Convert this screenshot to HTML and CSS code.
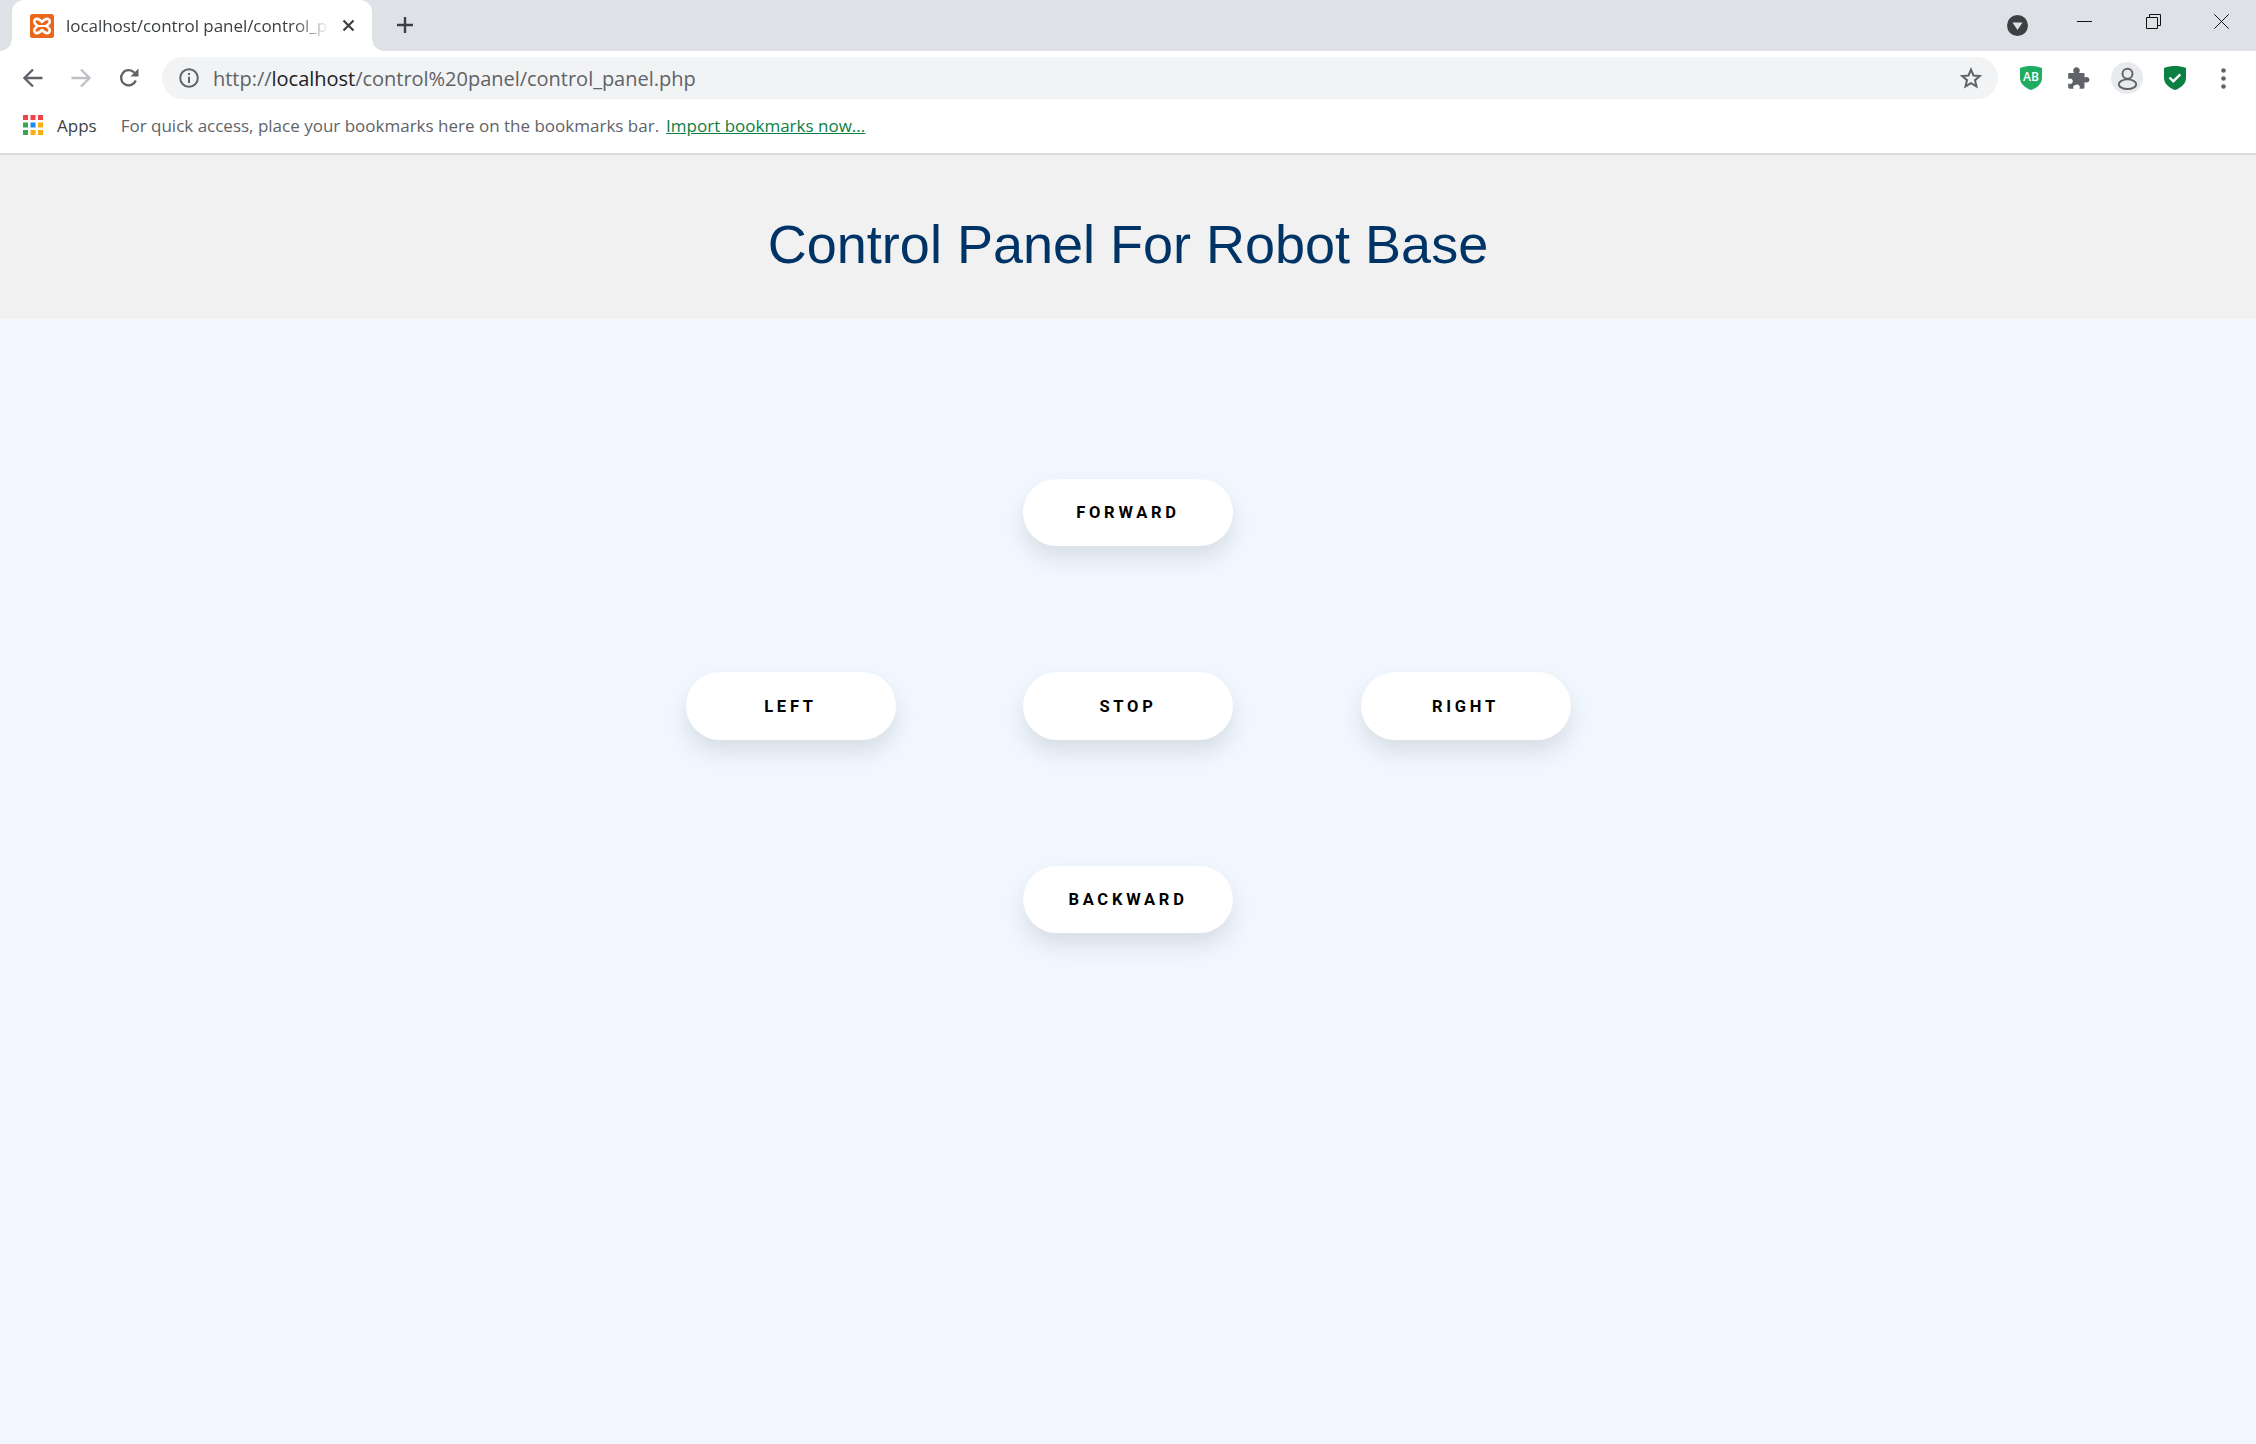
FILE: index.html
```html
<!DOCTYPE html>
<html lang="en">
<head>
<meta charset="utf-8">
<title>localhost/control panel/control_panel.php</title>
<link rel="stylesheet" href="styles.css">
</head>
<body>
<div class="browser">
  <div class="tabstrip">
    <div class="tab">
      <svg class="favicon" viewBox="0 0 24 24"><rect width="24" height="24" rx="2.500" fill="#e8671b"/><path d="M7 3.500c2 0 3 1 5 2.500c2-1.500 3-2.500 5-2.500c2.500 0 4 1.800 4 4c0 1.800-1.200 3.200-2.800 4.500c1.600 1.300 2.800 2.700 2.800 4.500c0 2.200-1.500 4-4 4c-2 0-3-1-5-2.500c-2 1.500-3 2.500-5 2.500c-2.500 0-4-1.800-4-4c0-1.800 1.200-3.200 2.800-4.500C4.200 10.700 3 9.300 3 7.500c0-2.200 1.500-4 4-4z" fill="#fff"/><path d="M7 6.300c1.500 0 3 1.900 5 3.100c2-1.200 3.500-3.100 5-3.100c1 0 1.500.6 1.500 1.300c0 1-1.500 2.300-3 3.400h-7c-1.500-1.100-3-2.400-3-3.400C5.500 6.900 6 6.300 7 6.300zM7 17.700c1.500 0 3-1.900 5-3.100c2 1.200 3.500 3.100 5 3.100c1 0 1.500-.6 1.500-1.300c0-1-1.500-2.300-3-3.400h-7c-1.500 1.100-3 2.400-3 3.400C5.500 17.100 6 17.700 7 17.700z" fill="#e8671b"/></svg>
      <span class="tab-title">localhost/control panel/control_p</span>
      <svg class="tab-close" viewBox="0 0 13 13"><path d="M1.500 1.500l10 10M11.500 1.500l-10 10" stroke="#3c4043" stroke-width="2.200"/></svg>
    </div>
    <svg class="new-tab" viewBox="0 0 18 18"><path d="M9 1v16M1 9h16" stroke="#3c4043" stroke-width="2.400"/></svg>
    <div class="strip-space"></div>
    <svg class="profile-menu" viewBox="0 0 21 21"><circle cx="10.500" cy="10.500" r="10.500" fill="#3c4043"/><path d="M5.500 7.500h10l-5 7.500z" fill="#dee1e6"/></svg>
    <div class="window-controls">
      <svg class="win" viewBox="0 0 15 15"><path d="M0 7.500h15" stroke="#111" stroke-width="1"/></svg>
      <svg class="win" viewBox="0 0 15 15"><path d="M.5 3.500h11v11H.5zM3.500 3.500V.5h11v11h-3" fill="none" stroke="#111" stroke-width="1"/></svg>
      <svg class="win" viewBox="0 0 15 15"><path d="M.3.300l14.400 14.400M14.700.300L.3 14.700" stroke="#111" stroke-width="1"/></svg>
    </div>
  </div>
  <div class="toolbar">
    <svg class="nav" viewBox="0 0 20 20"><path d="M19.500 10H2M10 1.500L1.500 10l8.500 8.500" fill="none" stroke="#5f6368" stroke-width="2.300"/></svg>
    <svg class="nav" viewBox="0 0 20 20"><path d="M.5 10H18M10 1.500l8.500 8.500-8.500 8.500" fill="none" stroke="#bdc1c6" stroke-width="2.300"/></svg>
    <svg class="nav" viewBox="0 0 20 20"><path d="M16.800 12.500A7.600 7.600 0 1 1 15.400 4.700" fill="none" stroke="#5f6368" stroke-width="2.300"/><path d="M19.500.6v8h-8z" fill="#5f6368"/></svg>
    <div class="omnibox">
      <svg class="info" viewBox="0 0 20 20"><circle cx="10" cy="10" r="8.800" fill="none" stroke="#5f6368" stroke-width="2"/><path d="M9 8.700h2V15H9zM9 5h2v2H9z" fill="#5f6368"/></svg>
      <span class="url">http://<b class="host">localhost</b>/control%20panel/control_panel.php</span>
      <svg class="star" viewBox="0 0 22 22"><path d="M11 2.600l2.500 5.900 6.300.5-4.800 4.200 1.500 6.200-5.500-3.300-5.500 3.300 1.500-6.200L2.200 9l6.300-.5z" fill="none" stroke="#5f6368" stroke-width="2"/></svg>
    </div>
    <div class="extensions">
      <svg class="shield" viewBox="0 0 22 24"><path d="M11 0c3.500 0 7 .6 11 2v10c0 5.500-5 10-11 12C5 22 0 17.500 0 12V2C4 .6 7.500 0 11 0z" fill="#1ead63"/><text class="ab" x="11" y="15" text-anchor="middle">AB</text></svg>
      <svg class="puzzle" viewBox="0 0 22 22"><path d="M1 6h5c-.5-1-.8-1.700-.8-2.600C5.200 1.500 6.700.2 8.500.2s3.300 1.300 3.300 3.200c0 .9-.3 1.600-.8 2.600h4.500c.6 0 1 .4 1 1v3.500c1-.5 1.400-.6 2.100-.6 1.600 0 2.900 1.200 2.900 2.800s-1.300 2.800-2.900 2.800c-.7 0-1.100-.1-2.100-.6V20c0 1-.6 1.800-1.600 1.800h-3.600c.4-.8.500-1.200.5-1.800 0-1.500-1.200-2.500-2.800-2.500S5.200 18.500 5.200 20c0 .6.100 1 .5 1.800H2c-1 0-1.800-.8-1.800-1.800v-3.400c.7.300 1.200.5 1.800.5 1.600 0 2.800-1.200 2.800-2.800S3.600 11.500 2 11.500c-.6 0-1.100.2-1.800.5V7c0-.6.300-1 .8-1z" fill="#5f6368"/></svg>
      <div class="avatar">
        <svg viewBox="0 0 24 26"><circle cx="12" cy="7.500" r="5.700" fill="none" stroke="#5f6368" stroke-width="2.200"/><ellipse cx="12" cy="19.500" rx="10" ry="5.500" fill="none" stroke="#5f6368" stroke-width="2.200"/></svg>
      </div>
      <svg class="shield" viewBox="0 0 22 24"><path d="M11 0c3.500 0 7 .6 11 2v10c0 5.500-5 10-11 12C5 22 0 17.500 0 12V2C4 .6 7.500 0 11 0z" fill="#0b8043"/><path d="M5.500 11.500l3.800 3.800 7-7" fill="none" stroke="#fff" stroke-width="2.400"/></svg>
      <svg class="dots" viewBox="0 0 5 21"><circle cx="2.500" cy="2.500" r="2.300" fill="#5f6368"/><circle cx="2.500" cy="10.500" r="2.300" fill="#5f6368"/><circle cx="2.500" cy="18.500" r="2.300" fill="#5f6368"/></svg>
    </div>
  </div>
  <div class="bookmarks">
    <svg class="apps" viewBox="0 0 20 20">
      <rect width="5" height="5" fill="#ef4444"/><rect x="7.500" width="5" height="5" fill="#ef4444"/><rect x="15" width="5" height="5" fill="#ef4444"/>
      <rect y="7.500" width="5" height="5" fill="#34a853"/><rect x="7.500" y="7.500" width="5" height="5" fill="#1a8cf0"/><rect x="15" y="7.500" width="5" height="5" fill="#fbad16"/>
      <rect y="15" width="5" height="5" fill="#34a853"/><rect x="7.500" y="15" width="5" height="5" fill="#fbad16"/><rect x="15" y="15" width="5" height="5" fill="#fbad16"/>
    </svg>
    <span class="apps-label">Apps</span>
    <span class="bm-hint">For quick access, place your bookmarks here on the bookmarks bar.</span>
    <a class="bm-import" href="#">Import bookmarks now...</a>
  </div>
</div>
<header class="page-header"><h1>Control Panel For Robot Base</h1></header>
<main class="panel">
  <div class="pad">
    <button class="btn btn-forward">FORWARD</button>
    <button class="btn btn-left">LEFT</button>
    <button class="btn btn-stop">STOP</button>
    <button class="btn btn-right">RIGHT</button>
    <button class="btn btn-backward">BACKWARD</button>
  </div>
</main>
</body>
</html>
```
FILE: styles.css
```css
* { box-sizing: border-box; }
html, body { margin: 0; height: 100%; }
body {
  display: flex;
  flex-direction: column;
  height: 1444px;
  overflow: hidden;
  background: #f0f7fe;
  font-family: "Liberation Sans", sans-serif;
}
.browser { flex: none; background: #fff; border-bottom: 2px solid #dadce0; font-family: "Open Sans", sans-serif; }

.tabstrip { display: flex; align-items: flex-start; height: 51px; background: #dee1e6; padding-left: 12px; }
.tab {
  position: relative;
  display: flex;
  align-items: center;
  width: 360px;
  height: 51px;
  padding: 0 17px 0 18px;
  background: #fff;
  border-radius: 12px 12px 0 0;
}
.tab::before, .tab::after {
  content: "";
  position: absolute;
  bottom: 0;
  width: 12px;
  height: 12px;
}
.tab::before { left: -12px; background: radial-gradient(circle at 0 0, #dee1e6 11.500px, #fff 12px); }
.tab::after { right: -12px; background: radial-gradient(circle at 100% 0, #dee1e6 11.500px, #fff 12px); }
.favicon { flex: none; width: 24px; height: 24px; }
.tab-title {
  flex: 1;
  min-width: 0;
  margin-left: 12px;
  white-space: nowrap;
  font-size: 17px;
  letter-spacing: -0.05px;
  color: #3c4043;
  -webkit-mask-image: linear-gradient(to right, #000 86%, transparent 100%);
  mask-image: linear-gradient(to right, #000 86%, transparent 100%);
}
.tab-close { flex: none; width: 13px; height: 13px; margin-left: 12px; }
.new-tab { flex: none; width: 18px; height: 18px; margin: 16px 0 0 24px; }
.strip-space { flex: 1; }
.profile-menu { flex: none; width: 21px; height: 21px; margin: 15px 1px 0 0; }
.window-controls { display: flex; gap: 53.500px; margin: 14px 27px 0 48px; }
.win { width: 15px; height: 15px; display: block; }

.toolbar { display: flex; align-items: center; height: 48px; padding: 6px 0 0 23px; }
.nav { flex: none; width: 20px; height: 20px; margin-right: 28px; }
.omnibox {
  display: flex;
  align-items: center;
  width: 1836px;
  height: 42px;
  margin-left: -5px;
  padding: 0 16px 0 17px;
  background: #f1f3f4;
  border-radius: 21px;
}
.info { flex: none; width: 20px; height: 20px; }
.url { flex: 1; margin-left: 14px; font-size: 20px; letter-spacing: -0.02px; color: #5f6368; white-space: nowrap; }
.host { font-weight: 400; color: #202124; }
.star { flex: none; width: 22px; height: 22px; }
.extensions { display: flex; align-items: center; margin-left: 22px; }
.shield { flex: none; width: 22px; height: 24px; }
.ab { font: 600 12px "Open Sans", sans-serif; fill: #fff; }
.puzzle { flex: none; width: 22px; height: 22px; margin-left: 26px; }
.avatar {
  display: flex;
  align-items: center;
  justify-content: center;
  flex: none;
  width: 32px;
  height: 32px;
  margin: 0 21px;
  border-radius: 50%;
  background: #e8eaed;
}
.avatar svg { width: 21px; height: 23px; }
.dots { flex: none; width: 5px; height: 21px; margin-left: 35px; }

.bookmarks { display: flex; align-items: center; height: 54px; padding: 0 0 2px 23px; font-size: 17px; color: #5f6368; }
.apps { flex: none; width: 20px; height: 20px; }
.apps-label { margin-left: 14px; color: #3c4043; }
.bm-hint { margin-left: 24px; }
.bm-import { margin-left: 7px; color: #0b8043; }

.page-header { flex: none; display: flex; align-items: center; justify-content: center; height: 164px; padding-top: 13px; background: #f1f1f1; }
.page-header h1 { margin: 0; font-size: 54px; font-weight: 400; color: #003366; }

.panel { flex: 1; display: flex; flex-direction: column; align-items: center; padding-top: 159.900px; }
.pad {
  display: grid;
  grid-template-columns: repeat(3, 210px);
  grid-auto-rows: 67.500px;
  gap: 126px 127.500px;
}
.btn {
  width: 210px;
  height: 67.500px;
  padding: 0;
  border: 0;
  border-radius: 34px;
  background: #fff;
  box-shadow: 0 12px 22px rgba(0, 0, 0, 0.1);
  font: 700 16.500px Roboto, sans-serif;
  letter-spacing: 3.750px;
  color: #000;
}
.btn-forward, .btn-backward { grid-column: 2; }
.btn-left { grid-column: 1; }
.btn-stop { grid-column: 2; }
.btn-right { grid-column: 3; }
```
